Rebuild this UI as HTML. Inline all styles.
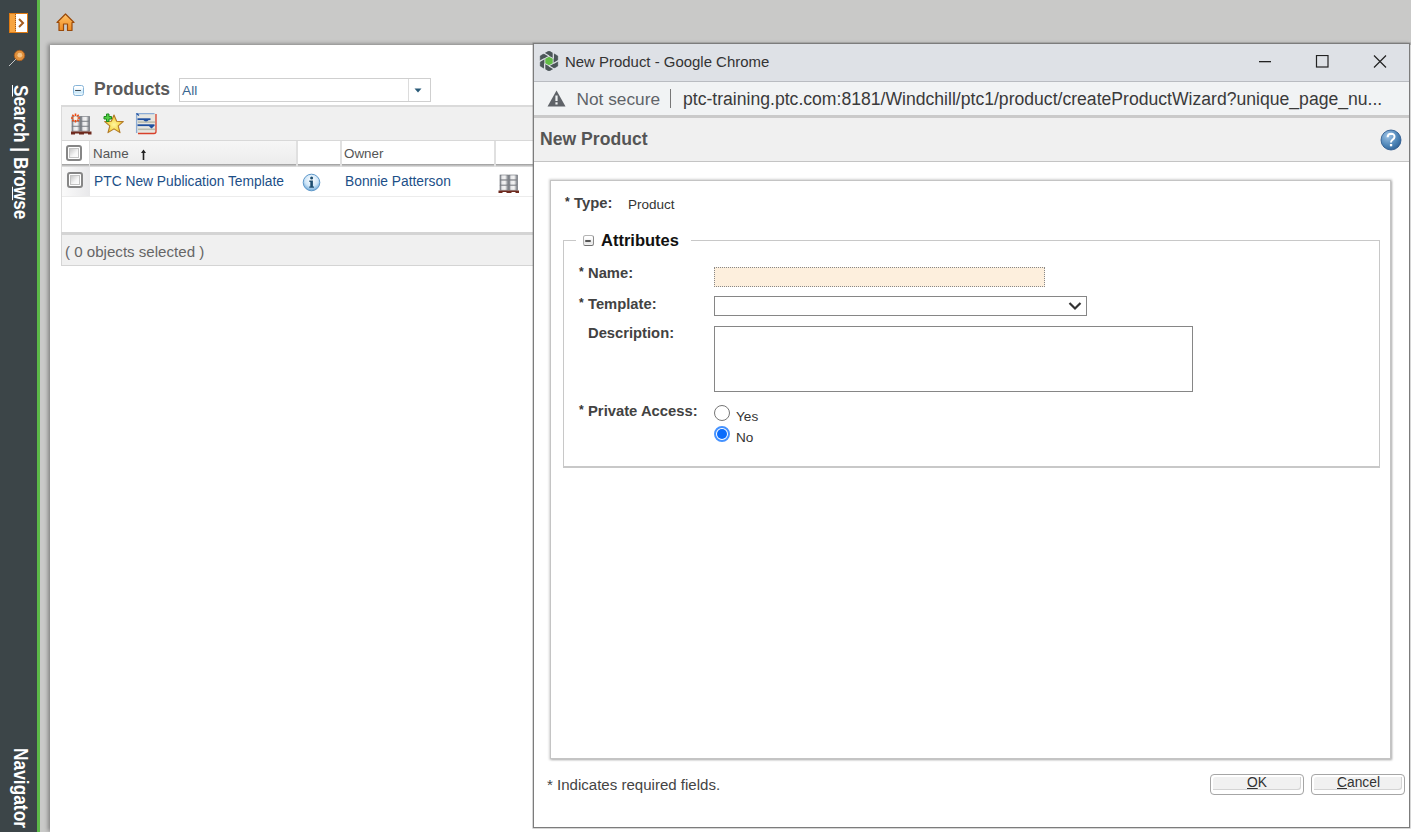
<!DOCTYPE html>
<html><head><meta charset="utf-8">
<style>
*{box-sizing:border-box}
html,body{margin:0;padding:0;width:1411px;height:832px;overflow:hidden;background:#c9c9c8;font-family:"Liberation Sans",sans-serif}
.a{position:absolute}
.t{position:absolute;white-space:nowrap;line-height:1}
#side{left:0;top:0;width:37px;height:832px;background:#3c4548}
#green{left:37px;top:0;width:3px;height:832px;background:#5cb948}
#panel{left:50px;top:45px;width:1361px;height:787px;background:#fff;box-shadow:-2px -1px 4px rgba(0,0,0,.35)}
.vt{position:absolute;white-space:nowrap;line-height:1;color:#fff;font-weight:bold;transform-origin:0 0;transform:rotate(90deg) scaleX(0.885)}
#popup{left:533px;top:43px;width:877px;height:785px;background:#fff;border:1px solid #7c7c7c;box-shadow:0 0 0 0.6px rgba(120,120,120,.5)}
.lbl{font-weight:bold;color:#424242;font-size:14.75px}
.star{font-size:12px;color:#333;font-weight:bold}
</style></head><body>
<div id="side" class="a"></div>
<div id="green" class="a"></div>

<!-- sidebar icons -->
<svg class="a" style="left:9px;top:13px" width="19" height="20" viewBox="0 0 19 20">
  <rect x="0.5" y="0.5" width="18" height="19" fill="#f7a541" stroke="#e07b12"/>
  <rect x="7" y="1" width="11" height="18" fill="#fff"/>
  <line x1="6.5" y1="1" x2="6.5" y2="19" stroke="#a0581a" stroke-dasharray="1,1"/>
  <path d="M10 6 L14 10 L10 14" fill="none" stroke="#a45a1c" stroke-width="2"/>
</svg>
<svg class="a" style="left:8px;top:48px" width="19" height="19" viewBox="0 0 19 19">
  <line x1="1" y1="18" x2="9" y2="10" stroke="#c8c8c8" stroke-width="1"/>
  <circle cx="11.5" cy="7.5" r="5.2" fill="#e0903c" stroke="#a85a1c" stroke-width="0.8"/>
  <circle cx="11.8" cy="7.2" r="2.4" fill="#f5c588"/>
</svg>
<div class="vt" style="left:29.5px;top:84.5px;font-size:19.5px"><span style="text-decoration:underline">S</span>earch | Bro<span style="text-decoration:underline">w</span>se</div>
<div class="vt" style="left:29.5px;top:748px;font-size:19.6px">Navigator</div>

<!-- home icon -->
<svg class="a" style="left:56px;top:13px" width="19" height="19" viewBox="0 0 19 19">
  <defs><linearGradient id="hg" x1="0" y1="0" x2="0" y2="1"><stop offset="0" stop-color="#ffc36a"/><stop offset="1" stop-color="#f08a1e"/></linearGradient></defs>
  <path d="M9.5 1 L18 9.5 L16 9.5 L16 17.5 L11.5 17.5 L11.5 11 L7.5 11 L7.5 17.5 L3 17.5 L3 9.5 L1 9.5 Z" fill="url(#hg)" stroke="#9a4a0a" stroke-width="1.2" stroke-linejoin="round"/>
</svg>

<div id="panel" class="a"></div>

<!-- Products header -->
<div class="a" style="left:72.5px;top:85px;width:11.5px;height:11px;border:1.3px solid #86b4d8;border-radius:2.5px;background:linear-gradient(#ffffff 20%,#c9e8fa 70%,#f2f9fd)"></div>
<div class="a" style="left:75px;top:89.8px;width:6px;height:1.6px;border-radius:1px;background:#3d4850"></div>
<div class="t" style="left:94px;top:80.6px;font-size:17.55px;font-weight:bold;color:#5a5a5a">Products</div>
<div class="a" style="left:179px;top:78px;width:252px;height:24px;border:1px solid #cfcfcf;background:#fff"></div>
<div class="a" style="left:408px;top:79px;width:1px;height:22px;background:#dcdcdc"></div>
<svg class="a" style="left:414px;top:88px" width="8" height="5"><path d="M0.5 0.5 L7.5 0.5 L4 4.5 Z" fill="#2a5a78"/></svg>
<div class="t" style="left:182px;top:83.5px;font-size:13.7px;color:#3a6690">All</div>

<!-- toolbar -->
<div class="a" style="left:61px;top:105px;width:480px;height:35px;background:#f0f0f0;border-top:2px solid #dadada;border-left:1px solid #dadada"></div>


<!-- toolbar icons -->
<svg class="a" style="left:70px;top:112px" width="23" height="24" viewBox="0 0 23 24">
  <defs><linearGradient id="bx" x1="0" y1="0" x2="1" y2="0"><stop offset="0" stop-color="#7c8088"/><stop offset="0.25" stop-color="#e8e8ea"/><stop offset="0.6" stop-color="#f4f4f4"/><stop offset="1" stop-color="#6c7078"/></linearGradient></defs>
  <g fill="url(#bx)" stroke="#6a6e75" stroke-width="0.6">
    <rect x="2" y="4.5" width="8.5" height="4.6"/><rect x="11" y="4.5" width="8.5" height="4.6"/>
    <rect x="2" y="9.5" width="8.5" height="4.6"/><rect x="11" y="9.5" width="8.5" height="4.6"/>
    <rect x="2" y="14.5" width="8.5" height="4.6"/><rect x="11" y="14.5" width="8.5" height="4.6"/>
  </g>
  <path d="M1 19.5 H21.5 V22.5 H18 V21.5 H14 V22.5 H9 V21.5 H5 V22.5 H1 Z" fill="#6e2a1e"/>
  <g stroke="#f04a10" stroke-width="1.6">
    <path d="M5.5 1.5 V4 M5.5 8 V10.5 M1 6 H3.5 M7.5 6 H10 M2.3 2.8 L3.8 4.3 M7.2 7.7 L8.7 9.2 M8.7 2.8 L7.2 4.3 M3.8 7.7 L2.3 9.2"/>
  </g>
  <circle cx="5.5" cy="6" r="1.8" fill="#fff2e0"/>
</svg>
<svg class="a" style="left:102px;top:112px" width="23" height="24" viewBox="0 0 23 24">
  <defs><radialGradient id="st" cx="0.5" cy="0.55" r="0.6"><stop offset="0" stop-color="#fff7a0"/><stop offset="0.7" stop-color="#f5d23a"/><stop offset="1" stop-color="#e0a820"/></radialGradient></defs>
  <path d="M12 3 L14.7 9.2 L21.3 9.6 L16.2 13.8 L18 20.6 L12 16.9 L6 20.6 L7.8 13.8 L2.7 9.6 L9.3 9.2 Z" fill="url(#st)" stroke="#b27a28" stroke-width="1.1" stroke-linejoin="round"/>
  <path d="M4.5 2 H7 V4.5 H9.5 V7 H7 V9.5 H4.5 V7 H2 V4.5 H4.5 Z" fill="#52d044" stroke="#1f8a1e" stroke-width="1"/>
</svg>
<svg class="a" style="left:135px;top:112px" width="23" height="24" viewBox="0 0 23 24">
  <rect x="1.5" y="1.5" width="19.5" height="20" fill="#e6e6e0"/>
  <path d="M21 2 V19.5 Q21 21.5 19 21.5 H3" fill="none" stroke="#d8402a" stroke-width="1.3"/>
  <path d="M1.6 21 V1.6 H19.5" fill="none" stroke="#8cacd4" stroke-width="1.3"/>
  <path d="M1.5 1.5 L4 3.5" stroke="#2050a0" stroke-width="1.2"/>
  <rect x="2.5" y="6.3" width="13" height="1.8" fill="#2050a0"/>
  <path d="M8 7.5 L14 7.5 L11 10.8 Z" fill="#2050a0"/>
  <rect x="3" y="9.3" width="17" height="1.6" fill="#b8bcb0"/>
  <rect x="2.5" y="12.3" width="17" height="1.8" fill="#2050a0"/>
  <path d="M13.5 13.5 L19.5 13.5 L16.5 16.8 Z" fill="#2050a0"/>
  <rect x="3" y="16.5" width="17" height="1.6" fill="#b8bcb0"/>
</svg>
<!-- table header -->
<div class="a" style="left:62px;top:140px;width:480px;height:25px;background:#fff;border-top:1px solid #d8d8d8"></div>
<div class="a" style="left:90px;top:141px;width:206px;height:24px;background:linear-gradient(#f6f6f6,#ececec)"></div>
<div class="a" style="left:62px;top:164px;width:480px;height:3px;background:linear-gradient(#9a9a9a,#e6e6e6)"></div>
<div class="a" style="left:89px;top:141px;width:1px;height:26px;background:#e0e0e0"></div>
<div class="a" style="left:296px;top:141px;width:2px;height:26px;background:#e0e0e0"></div>
<div class="a" style="left:340px;top:141px;width:2px;height:26px;background:#e0e0e0"></div>
<div class="a" style="left:494px;top:141px;width:2px;height:26px;background:#e0e0e0"></div>
<div class="t" style="left:93px;top:146.7px;font-size:13.4px;color:#555">Name</div>
<svg class="a" style="left:140px;top:149px" width="7" height="12"><path d="M3.5 0.5 L6 4 L4.3 4 L4.3 11 L2.7 11 L2.7 4 L1 4 Z" fill="#222"/></svg>
<div class="t" style="left:344px;top:146.7px;font-size:13.4px;color:#555">Owner</div>

<!-- row -->
<div class="a" style="left:62px;top:167px;width:28px;height:29px;background:linear-gradient(90deg,#fafafa,#e8e8ea)"></div>
<div class="a" style="left:62px;top:196px;width:480px;height:1px;background:#ececec"></div>
<div class="t" style="left:94px;top:174.5px;font-size:13.8px;color:#1c4f88">PTC New Publication Template</div>
<div class="t" style="left:345px;top:175px;font-size:13.8px;color:#1c4f88">Bonnie Patterson</div>

<div class="a" style="left:66px;top:145px;width:16px;height:16px;border:2px solid #868686;border-radius:3px;background:#fff;padding:1px"><div style="width:100%;height:100%;border:1px solid #c4c4c4;background:linear-gradient(135deg,#c8c8c8,#f6f6f6 60%,#fdfdfd)"></div></div><div class="a" style="left:67px;top:172px;width:16px;height:16px;border:2px solid #868686;border-radius:3px;background:#fff;padding:1px"><div style="width:100%;height:100%;border:1px solid #c4c4c4;background:linear-gradient(135deg,#c8c8c8,#f6f6f6 60%,#fdfdfd)"></div></div>
<svg class="a" style="left:302px;top:173px" width="19" height="19" viewBox="0 0 19 19">
  <defs><radialGradient id="inf" cx="0.5" cy="0.35" r="0.65"><stop offset="0" stop-color="#ffffff"/><stop offset="0.6" stop-color="#cfe6f8"/><stop offset="1" stop-color="#6aa6d6"/></radialGradient></defs>
  <circle cx="9.5" cy="9.5" r="8.3" fill="url(#inf)" stroke="#5d97c9" stroke-width="1"/>
  <circle cx="9.6" cy="5" r="1.5" fill="#1e4e70"/>
  <path d="M7.3 7.6 H10.9 V13.4 H12 V14.8 H7.2 V13.4 H8.3 V9 H7.3 Z" fill="#1e4e70"/>
</svg>
<svg class="a" style="left:498px;top:174px" width="22" height="20" viewBox="0 0 22 20">
  <g fill="url(#bx)" stroke="#6a6e75" stroke-width="0.6">
    <rect x="2" y="1" width="8.5" height="4.8"/><rect x="11" y="1" width="8.5" height="4.8"/>
    <rect x="2" y="6.2" width="8.5" height="4.8"/><rect x="11" y="6.2" width="8.5" height="4.8"/>
    <rect x="2" y="11.4" width="8.5" height="4.8"/><rect x="11" y="11.4" width="8.5" height="4.8"/>
  </g>
  <path d="M0.5 16.5 H21 V19 H17.5 V18 H13.5 V19 H8.5 V18 H4.5 V19 H0.5 Z" fill="#6e2a1e"/>
</svg>

<div class="a" style="left:61px;top:140px;width:1px;height:93px;background:#dcdcdc"></div>
<!-- footer -->
<div class="a" style="left:61px;top:232px;width:480px;height:34px;background:#f0f0f0;border-top:3px solid #d4d4d4;border-bottom:1px solid #d4d4d4;border-left:1px solid #d4d4d4"></div>
<div class="t" style="left:65px;top:244px;font-size:15.1px;color:#666">( 0 objects selected )</div>

<!-- POPUP -->
<div id="popup" class="a"></div>
<div class="a" style="left:534px;top:44px;width:875px;height:37px;background:#dee1e6"></div>
<div class="a" style="left:534px;top:81px;width:875px;height:1px;background:#b9bcc1"></div>
<div class="a" style="left:534px;top:82px;width:875px;height:33px;background:#f1f3f4"></div>
<div class="a" style="left:534px;top:115px;width:875px;height:3px;background:#cacaca"></div>
<div class="a" style="left:534px;top:118px;width:875px;height:44px;background:#f0f0f0;border-bottom:1px solid #c4c4c4"></div>


<!-- chrome title icons -->
<svg class="a" style="left:539px;top:51px" width="20" height="20" viewBox="-10 -10 20 20">
  <path d="M0.00,-10.00 L8.66,-5.00 L8.66,5.00 L0.00,10.00 L-8.66,5.00 L-8.66,-5.00Z" fill="#4b5558" stroke="#4b5558" stroke-width="0.8" stroke-linejoin="round"/>
  <path transform="scale(-1,1)" d="M4.33,-2.50 L11.26,1.50 M4.33,2.50 L4.33,10.50 M0.00,5.00 L-6.93,9.00 M-4.33,2.50 L-11.26,-1.50 M-4.33,-2.50 L-4.33,-10.50 M0.00,-5.00 L6.93,-9.00" stroke="#dee1e6" stroke-width="1.3"/>
  <path d="M0,-5.3 L4.6,-2.65 L4.6,2.65 L0,5.3 L-4.6,2.65 L-4.6,-2.65 Z" fill="#dee1e6"/>
  <path d="M0,-4.3 L3.72,-2.15 L3.72,2.15 L0,4.3 L-3.72,2.15 L-3.72,-2.15 Z" fill="#62bb46"/>
</svg>
<svg class="a" style="left:1258px;top:55px" width="130" height="14">
  <rect x="1" y="6" width="12" height="1.3" fill="#222"/>
  <rect x="58.5" y="0.5" width="11.5" height="11.5" fill="none" stroke="#222" stroke-width="1.2"/>
  <path d="M116 0.5 L128 12.5 M128 0.5 L116 12.5" stroke="#222" stroke-width="1.2"/>
</svg>
<svg class="a" style="left:547px;top:90px" width="19" height="17" viewBox="0 0 19 17">
  <path d="M9.5 0.5 L18.5 16.5 L0.5 16.5 Z" fill="#5f6368"/>
  <rect x="8.4" y="5.5" width="2.2" height="5.5" fill="#f1f3f4"/>
  <rect x="8.4" y="12.3" width="2.2" height="2.2" fill="#f1f3f4"/>
</svg>
<!-- help icon -->
<svg class="a" style="left:1380px;top:129px" width="22" height="22" viewBox="0 0 22 22">
  <defs><radialGradient id="hq" cx="0.35" cy="0.3" r="0.8"><stop offset="0" stop-color="#9ec3e6"/><stop offset="0.6" stop-color="#4f86b8"/><stop offset="1" stop-color="#2b5d92"/></radialGradient></defs>
  <circle cx="11" cy="11" r="10" fill="url(#hq)" stroke="#25538a" stroke-width="0.8"/>
  <path d="M7.6 8.2 Q7.8 4.8 11.2 4.8 Q14.6 4.9 14.5 7.9 Q14.4 9.8 12.2 11 Q11 11.8 11 13.5" fill="none" stroke="#fff" stroke-width="2"/>
  <rect x="9.9" y="15" width="2.3" height="2.3" fill="#fff"/>
</svg>
<div class="t" style="left:565px;top:55px;font-size:14.95px;color:#333">New Product - Google Chrome</div>
<div class="t" style="left:576.5px;top:91px;font-size:17.3px;color:#5f6368">Not secure</div>
<div class="a" style="left:670px;top:89px;width:1px;height:19px;background:#777"></div>
<div class="t" style="left:683px;top:91px;font-size:17.6px;color:#3a3a3a">ptc-training.ptc.com:8181/Windchill/ptc1/product/createProductWizard?unique_page_nu...</div>

<div class="t" style="left:540px;top:130.5px;font-size:17.6px;font-weight:bold;color:#555">New Product</div>

<!-- inner panel -->
<div class="a" style="left:550px;top:180px;width:841px;height:579px;background:#fff;border:1px solid #c4c4c4;box-shadow:0 0 2px 1px rgba(0,0,0,.16),1px 1px 2px rgba(0,0,0,.2)"></div>

<div class="t star" style="left:565px;top:196px">*</div>
<div class="t lbl" style="left:574px;top:196px;font-size:14.8px">Type:</div>
<div class="t" style="left:628px;top:197.5px;font-size:13.5px;color:#333">Product</div>

<!-- fieldset -->
<div class="a" style="left:563px;top:240px;width:817px;height:228px;border:1px solid #c8c8c8;border-bottom-width:2px"></div>
<div class="a" style="left:576px;top:236px;width:115px;height:10px;background:#fff"></div>
<div class="a" style="left:582.5px;top:235px;width:11.5px;height:11px;border:1.3px solid;border-color:#b4b4b4 #8a8a8a #707070 #b0b0b0;border-radius:2.5px;background:linear-gradient(#ffffff 20%,#e6e6e6 75%,#f4f4f4)"></div>
<div class="a" style="left:585px;top:240px;width:6px;height:1.6px;border-radius:1px;background:#555"></div>
<div class="t" style="left:601px;top:231.5px;font-size:16.5px;font-weight:bold;color:#111">Attributes</div>

<div class="t star" style="left:579px;top:266px">*</div>
<div class="t lbl" style="left:588px;top:266px">Name:</div>
<div class="a" style="left:714px;top:267px;width:331px;height:20px;background:#fdefdd;border:1px dotted #888"></div>

<div class="t star" style="left:579px;top:297px">*</div>
<div class="t lbl" style="left:588px;top:297px">Template:</div>
<div class="a" style="left:714px;top:296px;width:373px;height:20px;background:#fff;border:1px solid #868686"></div>
<svg class="a" style="left:1068px;top:301px" width="14" height="10"><path d="M1.5 2 L7 7.5 L12.5 2" fill="none" stroke="#333" stroke-width="2.2"/></svg>

<div class="t lbl" style="left:588px;top:326px">Description:</div>
<div class="a" style="left:714px;top:326px;width:479px;height:66px;background:#fff;border:1px solid #868686"></div>

<div class="t star" style="left:579px;top:404px">*</div>
<div class="t lbl" style="left:588px;top:404px;font-size:14.8px">Private Access:</div>
<div class="a" style="left:714px;top:405px;width:16px;height:16px;border:1px solid #767676;border-radius:50%;background:#fff"></div>
<div class="t" style="left:736px;top:409.5px;font-size:13.6px;color:#333">Yes</div>
<div class="a" style="left:714px;top:426px;width:16px;height:16px;border:2px solid #4592ff;border-radius:50%;background:#fff"></div>
<div class="a" style="left:717px;top:429px;width:10px;height:10px;border-radius:50%;background:#0b6cfb"></div>
<div class="t" style="left:736px;top:431px;font-size:13.6px;color:#333">No</div>

<div class="t" style="left:547px;top:776.8px;font-size:15.05px;color:#444">* Indicates required fields.</div>
<div class="a" style="left:1210px;top:774px;width:94px;height:21px;border:1px solid #a6a6a6;border-radius:4px;background:#f1f1f1;box-shadow:inset 2px 2px 0 #fff,inset -2px -4px 0 #fff,inset -3px -5px 0 #d4d4d4"></div>
<div class="t" style="left:1247px;top:776px;font-size:13.8px;color:#333"><u>O</u>K</div>
<div class="a" style="left:1311px;top:774px;width:94px;height:21px;border:1px solid #a6a6a6;border-radius:4px;background:#f1f1f1;box-shadow:inset 2px 2px 0 #fff,inset -2px -4px 0 #fff,inset -3px -5px 0 #d4d4d4"></div>
<div class="t" style="left:1337px;top:776px;font-size:13.8px;color:#333"><u>C</u>ancel</div>
</body></html>
